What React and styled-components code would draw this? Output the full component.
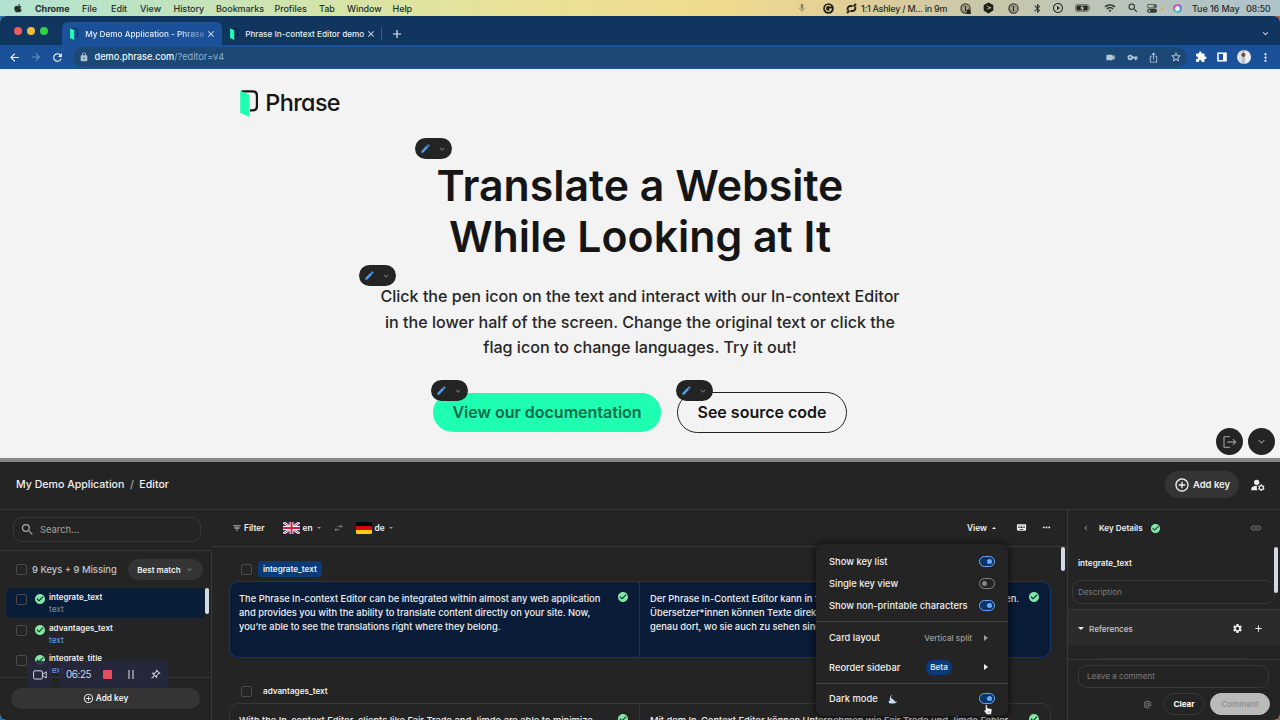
import React from 'react';
import styled, { createGlobalStyle, css } from 'styled-components';
import { FaApple } from 'react-icons/fa';
import {
  MdAdd, MdAddCircleOutline, MdAlternateEmail, MdArrowBack, MdArrowForward, MdBluetooth,
  MdCheckCircle, MdChevronLeft, MdClose, MdEdit, MdExpandMore, MdExtension, MdFilterList,
  MdIosShare, MdKeyboard, MdLink, MdLock, MdLogout, MdManageAccounts, MdMic, MdMoreHoriz,
  MdMoreVert, MdOutlinePushPin, MdPlayCircleOutline, MdRefresh, MdSearch, MdSettings,
  MdStarBorder, MdVideocam, MdVpnKey, MdWifi,
} from 'react-icons/md';

const GlobalStyle = createGlobalStyle`
  * { box-sizing: border-box; }
  body { margin: 0; overflow: hidden; font-family: Inter, "Liberation Sans", sans-serif; }
  svg { display: block; flex-shrink: 0; }
  h1, p { margin: 0; }
`;

const line = '#383838';

const Desktop = styled.div`
  width: 1280px;
  height: 720px;
  display: flex;
  flex-direction: column;
  overflow: hidden;
  background: linear-gradient(90deg, #2a6fb0 0%, #2a6fb0 50%, #c4552f 50%, #c4552f 100%);
`;

/* ---------- menu bar ---------- */

const MenuBar = styled.div`
  display: flex;
  align-items: center;
  height: 16px;
  padding-left: 12px;
  font-size: 9px;
  color: #23302c;
  white-space: nowrap;
  background: linear-gradient(90deg, #b3e2d2 0%, #bfe3c0 12%, #d3e4a9 25%, #e9e297 40%, #eedb8c 56%, #e2cf97 66%, #cbc8a9 76%, #b8c4bb 88%, #afc3cb 100%);
`;

const MenuItem = styled.span`
  width: ${p => p.$w}px;
  font-weight: ${p => (p.$bold ? 700 : 500)};
  letter-spacing: ${p => p.$ls || 0}px;
`;

const Slot = styled.span`
  display: flex;
  align-items: center;
  justify-content: center;
  width: ${p => p.$w}px;
  color: ${p => p.$color || 'inherit'};
`;

const Spring = styled.div`
  flex: 1;
`;

const OrangeDot = styled.i`
  width: 3px;
  height: 3px;
  border-radius: 50%;
  background: #eda541;
`;

const Siri = styled.i`
  width: 9px;
  height: 9px;
  border-radius: 50%;
  background: radial-gradient(#eee 30%, transparent 45%), conic-gradient(#c85ad0, #5a6fe0, #39b8c8, #4fd0b8, #d0508c, #c85ad0);
`;

/* ---------- browser ---------- */

const BrowserWindow = styled.div`
  display: flex;
  flex-direction: column;
  height: 704px;
  border-radius: 6px;
  overflow: hidden;
  background: #f3f3f3;
`;

const TabStrip = styled.div`
  display: flex;
  align-items: flex-end;
  height: 29px;
  background: #10365f;
  color: #e4ecf5;
`;

const Lights = styled.div`
  display: flex;
  gap: 5px;
  width: 62px;
  height: 29px;
  padding: 11px 0 0 14px;
`;

const Light = styled.i`
  width: 8px;
  height: 8px;
  border-radius: 50%;
  background: ${p => p.$color};
`;

const Tab = styled.div`
  display: flex;
  align-items: center;
  width: 160px;
  height: 23px;
  padding-left: 8px;
  border-radius: 6px 6px 0 0;
  background: ${p => (p.$active ? '#1b5199' : 'transparent')};
`;

const TabTitle = styled.span`
  width: 119px;
  margin: 0 2px 0 7px;
  font-size: 8.2px;
  font-weight: 500;
  white-space: nowrap;
  ${p => p.$fade && css`
    mask-image: linear-gradient(90deg, #000 80%, rgba(0, 0, 0, 0.35) 97%);
  `}
`;

const StripButton = styled.span`
  display: flex;
  align-items: center;
  justify-content: center;
  height: 23px;
  width: ${p => p.$w}px;
`;

const TabSeparator = styled.i`
  width: 1px;
  height: 13px;
  margin: 0 0 5px -1px;
  background: #3a5b82;
`;

const AddressRow = styled.div`
  display: flex;
  align-items: center;
  height: 24px;
  background: #1b5199;
  color: #fff;
`;

const NavIcons = styled.div`
  display: flex;
  align-items: center;
  width: 73px;
  padding-left: 8px;
  gap: 9px;
`;

const Omnibox = styled.div`
  display: flex;
  align-items: center;
  width: 1114px;
  height: 20px;
  padding-left: 6px;
  border-radius: 10px;
  background: #1b4874;
  font-size: 9.2px;
  color: #8eb0d2;
`;

const Url = styled.span`
  margin-left: 5.5px;
  padding-bottom: 1px;
  b { font-weight: 500; color: #f2f6fa; }
`;

const Avatar = styled.i`
  width: 14px;
  height: 14px;
  border-radius: 50%;
  background: radial-gradient(circle at 45% 35%, #7a4a3c 0 1.5px, transparent 2.5px), linear-gradient(90deg, #dfe3ea 30%, #a9b2bd 45%, #eceff3 65%);
`;

/* ---------- demo page ---------- */

const Page = styled.main`
  position: relative;
  height: 389px;
  display: flex;
  flex-direction: column;
  align-items: center;
  color: #151515;
`;

const Brand = styled.div`
  display: flex;
  align-items: center;
  gap: 7px;
  width: 800px;
  height: 30px;
  margin-top: 19px;
`;

const BrandName = styled.span`
  font-size: 23.4px;
  line-height: 28px;
  font-weight: 500;
  letter-spacing: -0.65px;
  font-feature-settings: 'cv11';
`;

const Title = styled.h1`
  margin-top: 42px;
  font-size: 42.8px;
  line-height: 51px;
  font-weight: 600;
  text-align: center;
`;

const Lead = styled.p`
  margin-top: 22px;
  font-size: 16.1px;
  line-height: 25.7px;
  font-weight: 500;
  color: #262626;
  text-align: center;
  white-space: nowrap;
`;

const Actions = styled.div`
  display: flex;
  align-items: center;
  gap: 16px;
  margin-top: 31px;
`;

const ActionButton = styled.div`
  position: relative;
  display: flex;
  align-items: center;
  justify-content: center;
  width: ${p => (p.$primary ? 228 : 170)}px;
  height: ${p => (p.$primary ? 39 : 41)}px;
  padding-bottom: 2px;
  border-radius: 21px;
  border: ${p => (p.$primary ? 'none' : '1.5px solid #222')};
  background: ${p => (p.$primary ? '#1effb2' : 'transparent')};
  color: ${p => (p.$primary ? '#0b6b4a' : '#151515')};
  font-size: 16px;
  font-weight: 600;
  white-space: nowrap;
`;

/* edit badge that floats over each translatable text */
const PenBadge = styled.div`
  position: absolute;
  left: ${p => p.$left}px;
  top: ${p => p.$top}px;
  display: flex;
  align-items: center;
  justify-content: space-between;
  width: 37px;
  height: 21px;
  padding: 0 5px 0 5px;
  border-radius: 11px;
  background: #242424;
  color: #4f9ff0;
  svg + svg { color: #777; }
`;

const FloatButtons = styled.div`
  position: absolute;
  right: 5px;
  bottom: 3px;
  display: flex;
  gap: 5px;
`;

const RoundButton = styled.div`
  display: flex;
  align-items: center;
  justify-content: center;
  width: 27px;
  height: 27px;
  border-radius: 50%;
  background: #242424;
  color: #8c8c8c;
`;

/* ---------- editor ---------- */

const Editor = styled.section`
  position: relative;
  height: 262px;
  border-top: 4px solid #868686;
  background: #242424;
  color: #f0f0f0;
  font-size: 8.1px;
`;

const EditorHeader = styled.header`
  display: flex;
  align-items: center;
  justify-content: space-between;
  height: 48px;
  padding: 0 14px 2px 16px;
  border-bottom: 1px solid ${line};
`;

const Crumbs = styled.div`
  display: flex;
  gap: 5.5px;
  font-size: 10.6px;
  font-weight: 500;
  i { font-style: normal; color: #aaa; }
`;

const HeaderActions = styled.div`
  display: flex;
  align-items: center;
  gap: 11px;
`;

const AddKey = styled.div`
  display: flex;
  align-items: center;
  justify-content: center;
  gap: 3px;
  width: 74px;
  height: 27px;
  border-radius: 14px;
  background: #343434;
  font-size: 9.5px;
  font-weight: 600;
`;

const Columns = styled.div`
  display: flex;
  height: 210px;
`;

const Sidebar = styled.aside`
  display: flex;
  flex-direction: column;
  width: 212px;
`;

const SearchArea = styled.div`
  height: 41px;
  padding: 7px 11px 0 13px;
  border-bottom: 1px solid ${line};
`;

const SearchBox = styled.div`
  display: flex;
  align-items: center;
  gap: 5px;
  height: 25px;
  padding-left: 6px;
  border: 1px solid ${line};
  border-radius: 9px;
  color: #a2a2a2;
  font-size: 9.4px;
`;

const KeyPane = styled.div`
  flex: 1;
  display: flex;
  flex-direction: column;
  border-right: 1px solid ${line};
`;

const KeyHead = styled.div`
  display: flex;
  align-items: center;
  height: 37px;
  padding-left: 16px;
  color: #c4c4c4;
  font-size: 9.4px;
  font-weight: 500;
`;

const Checkbox = styled.i`
  width: 11px;
  height: 11px;
  flex-shrink: 0;
  border: 1px solid #4a4a4a;
  border-radius: 2px;
`;

const KeyCount = styled.span`
  width: 96px;
  margin-left: 5px;
  white-space: nowrap;
`;

const SortButton = styled.div`
  display: flex;
  align-items: center;
  justify-content: center;
  gap: 4px;
  width: 75px;
  height: 21px;
  border-radius: 11px;
  background: #343434;
  color: #f2f2f2;
  font-size: 8px;
  font-weight: 600;
  svg { color: #888; }
`;

const KeyList = styled.div`
  position: relative;
  height: 88.5px;
  padding-left: 6px;
  overflow: hidden;
`;

const KeyRow = styled.div`
  display: flex;
  width: 200px;
  height: 30px;
  margin-bottom: 0.6px;
  padding: 3px 0 0 10px;
  border-radius: 6px;
  background: ${p => (p.$selected ? '#0a1d38' : 'transparent')};
  line-height: 12px;
  ${Checkbox} { margin-top: 3px; }
  svg { margin: 2px 3px 0 7px; color: #7fe9a4; }
`;

const KeyName = styled.div`
  font-weight: 600;
  font-size: 8px;
  div {
    font-weight: 400;
    font-size: 8.3px;
    color: ${p => (p.$selected ? '#7f8c9e' : '#5ea2ea')};
  }
`;

const Thumb = styled.div`
  position: absolute;
  right: ${p => p.$right}px;
  top: ${p => p.$top}px;
  width: 4px;
  height: ${p => p.$height}px;
  border-radius: 2px;
  background: #d2dae4;
`;

const SideFooter = styled.div`
  flex: 1;
  padding: 10px 11px 0;
  border-top: 1px solid ${line};
`;

const WideAdd = styled.div`
  display: flex;
  align-items: center;
  justify-content: center;
  gap: 2px;
  height: 21px;
  border-radius: 11px;
  background: #343434;
  font-size: 8.3px;
  font-weight: 600;
`;

const Recorder = styled.div`
  position: absolute;
  left: 27px;
  top: 199px;
  display: flex;
  gap: 7px;
  color: #d5d6e2;
`;

const RecorderBox = styled.div`
  display: flex;
  align-items: center;
  justify-content: space-between;
  width: ${p => p.$w}px;
  height: 27px;
  padding: 0 ${p => p.$pad}px;
  border-radius: 4px;
  background: rgba(38, 40, 62, 0.88);
  font-size: 9.8px;
  letter-spacing: -0.4px;
`;

const StopSquare = styled.i`
  width: 9px;
  height: 9px;
  margin-left: -3px;
  border-radius: 1px;
  background: #e84d5b;
`;

const Main = styled.div`
  position: relative;
  width: 856px;
  border-right: 1px solid ${line};
`;

const MainBar = styled.div`
  display: flex;
  align-items: center;
  height: 37px;
  padding: 0 15px 1px 20px;
  border-bottom: 1px solid ${line};
  font-size: 8.4px;
  font-weight: 600;
`;

const BarItem = styled.span`
  display: flex;
  align-items: center;
  gap: ${p => p.$gap || 3}px;
  width: ${p => p.$w}px;
`;

const Caret = styled.i`
  border: ${p => p.$s || 2}px solid transparent;
  ${p => p.$dir === 'up' && css`border-bottom-color: currentColor; margin: 0 0 2px 2px;`}
  ${p => p.$dir === 'down' && css`border-top-color: currentColor; margin-top: 2px;`}
  ${p => p.$dir === 'right' && css`border-left: 4px solid currentColor; border-right: 0; border-top-width: 3px; border-bottom-width: 3px;`}
  ${p => p.$dim && css`color: #999; margin-left: 2px;`}
`;

const Cards = styled.div`
  height: 173px;
  padding: 12px 16px 0 17px;
  overflow: hidden;
`;

const CardHead = styled.div`
  display: flex;
  align-items: center;
  gap: 6px;
  height: 21px;
  padding: 0 0 1px 12px;
`;

const KeyPill = styled.span`
  padding: 0 5px;
  height: 16px;
  line-height: 16px;
  border-radius: 4px;
  background: ${p => (p.$active ? '#0a3b76' : 'transparent')};
  font-weight: 600;
`;

const Card = styled.div`
  display: flex;
  height: 77px;
  margin: 1px 0 23px;
  border: 1px solid ${p => (p.$active ? '#123a68' : line)};
  border-radius: 10px;
  background: ${p => (p.$active ? '#0a1c37' : 'transparent')};
`;

const Cell = styled.div`
  display: flex;
  justify-content: space-between;
  width: 409px;
  padding: 10px 10px 0 9px;
  font-size: 9.33px;
  line-height: 14px;
  font-weight: 500;
  white-space: nowrap;
  & + & {
    flex: 1;
    padding-left: 10px;
    border-left: 1px solid ${p => (p.$active ? '#123a68' : line)};
  }
  svg { margin-top: -1px; color: #7fe9a4; }
`;

const ViewMenu = styled.div`
  position: absolute;
  left: 604px;
  top: 34px;
  width: 192px;
  height: 172px;
  padding-top: 6.5px;
  border-radius: 8px;
  background: #242424;
  box-shadow: 0 1px 7px 2px rgba(0, 0, 0, 0.55);
  font-size: 9.35px;
  font-weight: 500;
`;

const MenuRow = styled.div`
  display: flex;
  align-items: center;
  justify-content: space-between;
  height: ${p => p.$h || 22}px;
  padding: 0 ${p => p.$right || 13}px 0 13px;
`;

const MenuLine = styled.div`
  height: 1px;
  margin: ${p => p.$m};
  background: #414141;
`;

const MenuGroup = styled.span`
  display: flex;
  align-items: center;
  gap: ${p => p.$gap}px;
  color: ${p => p.$color || 'inherit'};
  font-size: ${p => p.$size || 9.35}px;
`;

const Toggle = styled.i`
  display: flex;
  align-items: center;
  justify-content: ${p => (p.$on ? 'flex-end' : 'flex-start')};
  width: 16px;
  height: 11px;
  padding: 0 2px;
  border: 1px solid ${p => (p.$on ? '#6aaaf4' : '#858585')};
  border-radius: 6px;
  background: ${p => (p.$on ? '#0b3468' : 'transparent')};
  &::after {
    content: '';
    width: 5px;
    height: 5px;
    border-radius: 50%;
    background: ${p => (p.$on ? '#6aaaf4' : '#858585')};
  }
`;

const Beta = styled.span`
  height: 15px;
  line-height: 15px;
  padding: 0 4px;
  border-radius: 7px;
  background: #0a3b76;
  color: #cfe3fb;
  font-size: 8.2px;
  font-weight: 600;
`;

const Pointer = styled.div`
  position: absolute;
  left: 167px;
  top: 160px;
`;

const Details = styled.aside`
  position: relative;
  display: flex;
  flex-direction: column;
  width: 212px;
`;

const DetailsHead = styled.div`
  display: flex;
  align-items: center;
  height: 36px;
  padding: 0 18px 0 13px;
  font-weight: 600;
  span { width: 51px; margin-left: 8px; white-space: nowrap; }
`;

const DetailsKey = styled.div`
  height: 34px;
  padding-left: 10px;
  line-height: 34px;
  font-weight: 600;
`;

const Field = styled.div`
  height: ${p => p.$h}px;
  line-height: ${p => p.$h - 2}px;
  margin: ${p => p.$m};
  padding-left: ${p => p.$pad}px;
  border: 1px solid ${line};
  border-radius: 9px;
  color: #7c7c7c;
`;

const References = styled.div`
  display: flex;
  align-items: center;
  height: 37px;
  margin-top: 5px;
  padding: 1px 16px 0 10px;
  border-top: 1px solid ${line};
  background: #2b2b2b;
  font-weight: 500;
  span { flex: 1; margin-left: 5px; color: #c8c8c8; }
  svg + svg { margin-left: 10px; }
`;

const ReferenceEdge = styled.div`
  height: 1px;
  margin: 12px 33px 0 32px;
  background: #303030;
`;

const CommentBox = styled.div`
  flex: 1;
  border-top: 1px solid ${line};
`;

const CommentActions = styled.div`
  display: flex;
  align-items: center;
  justify-content: flex-end;
  height: 32px;
  padding-right: 10px;
  color: #8a8a8a;
`;

const PillButton = styled.div`
  height: 22px;
  line-height: 20px;
  width: ${p => p.$w}px;
  margin-left: ${p => p.$ml}px;
  text-align: center;
  border: 1px solid ${p => (p.$muted ? '#bababa' : '#3a3a3a')};
  border-radius: 11px;
  background: ${p => (p.$muted ? '#bababa' : 'transparent')};
  color: ${p => (p.$muted ? '#8a8a8a' : '#fff')};
  font-weight: ${p => (p.$muted ? 500 : 700)};
`;

/* ---------- drawings ---------- */

const PhraseMark = ({ size = 27, dark = '#151515' }) => (
  <svg width={size * 0.68} height={size} viewBox="0 0 18.4 27">
    <path d="M1.5 1.3H12.5Q17 1.3 17 5.8V16.2Q17 20.4 12.5 20.4H10" fill="none" stroke={dark} strokeWidth="2.3" />
    <path d="M.2.6 9.4 4.8V27L.2 22.8Z" fill="#1effb2" />
  </svg>
);

const UkFlag = () => (
  <svg width="17" height="12" viewBox="0 0 17 12">
    <rect width="17" height="12" rx="1.5" fill="#23306f" />
    <path d="M0 0 17 12M17 0 0 12" stroke="#fff" strokeWidth="2.4" />
    <path d="M0 0 17 12M17 0 0 12" stroke="#d21f3c" strokeWidth=".8" />
    <path d="M8.5 0V12M0 6H17" stroke="#fff" strokeWidth="3.8" />
    <path d="M8.5 0V12M0 6H17" stroke="#d21f3c" strokeWidth="2" />
  </svg>
);

const DeFlag = () => (
  <svg width="16" height="12" viewBox="0 0 16 12">
    <path d="M1.5 0H14.5Q16 0 16 1.5V4H0V1.5Q0 0 1.5 0Z" fill="#050505" />
    <path d="M0 4H16V8H0Z" fill="#d40a0a" />
    <path d="M0 8H16V10.5Q16 12 14.5 12H1.5Q0 12 0 10.5Z" fill="#ffce18" />
  </svg>
);

const SwapArrows = () => (
  <svg width="9" height="8" viewBox="0 0 9 8" fill="none" stroke="#858585" strokeWidth=".9">
    <path d="M3.5 2.3H8M6.6.8 8.1 2.3 6.6 3.8M5.5 5.7H1M2.4 4.2.9 5.7 2.4 7.2" />
  </svg>
);

const GrammarBadge = () => (
  <svg width="11" height="11" viewBox="0 0 11 11">
    <circle cx="5.5" cy="5.5" r="5.3" fill="#1d2017" />
    <path d="M7.8 3.6A3 3 0 1 0 8.3 6.2H6" fill="none" stroke="#e8d489" strokeWidth="1.2" />
  </svg>
);

const Rings = () => (
  <svg width="11" height="11" viewBox="0 0 11 11" fill="none" stroke="#1d2017" strokeWidth="1.9">
    <path d="M1.7 7.4Q1 3.2 4.6 3H6.6M9.3 3.6Q10 7.8 6.4 8H4.4M1 10 3.4 7.8M10 1 7.6 3.2" />
  </svg>
);

const KeyholeIcon = ({ locked }) => (
  <svg width="11" height="11" viewBox="0 0 11 11">
    <circle cx="5.5" cy="5.5" r="4.6" fill="none" stroke="#36372e" strokeWidth="1.2" />
    <circle cx="5.5" cy="5.5" r="2.9" fill="none" stroke="#36372e" strokeWidth=".6" />
    <path d="M5.5 3.2V7.8" stroke="#24251e" strokeWidth="1.5" />
    {locked && <path d="M6.5 7.5H10.8V11H6.5ZM7.4 7.5V6.2H9.9V7.5" fill="#24251e" />}
  </svg>
);

const HexIcon = () => (
  <svg width="11" height="12" viewBox="0 0 11 12">
    <path d="M5.5.4 10.3 3V8.6L5.8 11.3 5.3 11.6.7 8.6V3Z" fill="#1d2017" />
    <path d="M3.6 3.9 6.9 5.7 3.8 7.4" fill="none" stroke="#c9c3a0" strokeWidth=".8" />
    <circle cx="7.2" cy="5.7" r=".9" fill="#c9c3a0" />
  </svg>
);

const BatteryIcon = () => (
  <svg width="16" height="8" viewBox="0 0 16 8">
    <rect x=".5" y=".5" width="13.2" height="7" rx="1.8" fill="none" stroke="#5f655a" strokeWidth=".8" />
    <rect x="1.5" y="1.5" width="11.2" height="5" rx="1" fill="#23241e" />
    <path d="M8 .6 5 4.4H7L6.3 7.4 9.4 3.6H7.4Z" fill="#c4c7b2" />
    <path d="M14.6 2.8V5.2" stroke="#5f655a" />
  </svg>
);

const ControlIcon = () => (
  <svg width="10" height="9" viewBox="0 0 10 9">
    <rect x=".4" y=".4" width="9.2" height="3.5" rx="1.7" fill="none" stroke="#333b37" strokeWidth=".8" />
    <circle cx="7.7" cy="2.1" r="1.2" fill="#333b37" />
    <rect x="0" y="4.8" width="10" height="4" rx="2" fill="#333b37" />
    <circle cx="2.3" cy="6.8" r="1" fill="#b8c4bb" />
  </svg>
);

const PanelIcon = () => (
  <svg width="10" height="10" viewBox="0 0 10 10">
    <rect x="1" y="1.2" width="8" height="7.6" fill="none" stroke="#fff" strokeWidth="1.5" />
    <path d="M6 1H9.2V9H6Z" fill="#fff" />
  </svg>
);

const CameraIcon = () => (
  <svg width="14" height="10" viewBox="0 0 14 10" fill="none" stroke="currentColor">
    <rect x=".6" y=".8" width="8.8" height="8.2" rx="1.2" />
    <path d="M9.6 4.2 13.2 1.8V8L9.6 5.6" />
  </svg>
);

const PauseIcon = () => (
  <svg width="6" height="9" viewBox="0 0 6 9" stroke="currentColor" strokeWidth="1.1">
    <path d="M1 0V9M5 0V9" />
  </svg>
);

const NightIcon = () => (
  <svg width="10" height="10" viewBox="0 0 10 10" fill="#c9dcee">
    <path d="M4.2.6Q2.6 2.6 3.4 4.6 4.6 4.6 5.2 5.8 6.6 6 6.8 7.6 8.4 7.8 9.4 7.2 8 9.6 5.2 9.4H2Q.6 9.2.6 7.8.8 6.6 1.9 6.4 1.4 2.4 4.2.6Z" />
  </svg>
);

const HandCursor = () => (
  <svg width="10" height="11" viewBox="0 0 10 11">
    <path d="M3 .7Q4.1.5 4.2 1.6V4L8.2 4.8Q9.2 5 9 6.2L8.2 10.4H3.8L.9 7Q.7 5.7 2 6L2.4 6.4V1.4Q2.4.8 3 .7Z" fill="#fff" stroke="#222" strokeWidth=".6" />
    <path d="M5 7V9M6.6 7V9" stroke="#555" strokeWidth=".5" />
  </svg>
);

const menus = [
  ['Chrome', 47, true], ['File', 29], ['Edit', 29], ['View', 33.5], ['History', 42.5],
  ['Bookmarks', 58.5], ['Profiles', 44.5], ['Tab', 28], ['Window', 45.5], ['Help', 30],
];

const keys = [
  { name: 'integrate_text', selected: true },
  { name: 'advantages_text' },
  { name: 'integrate_title' },
];

const Badge = ({ left, top }) => (
  <PenBadge $left={left} $top={top}>
    <MdEdit size={11} />
    <MdExpandMore size={10} />
  </PenBadge>
);

const SystemBar = () => (
  <MenuBar>
    <Slot $w={11}><FaApple size={10} /></Slot>
    <Slot $w={12} />
    {menus.map(([label, w, bold]) => (
      <MenuItem key={label} $w={w} $bold={bold} $ls={-0.05}>{label}</MenuItem>
    ))}
    <Spring />
    <Slot $w={24} $color="#85816a"><MdMic size={10} /></Slot>
    <Slot $w={28}><GrammarBadge /></Slot>
    <Slot $w={19}><Rings /></Slot>
    <MenuItem $w={91} $ls={-0.27}>1:1 Ashley / M... in 9m</MenuItem>
    <Slot $w={26}><KeyholeIcon locked /></Slot>
    <Slot $w={20}><HexIcon /></Slot>
    <Slot $w={30}><KeyholeIcon /></Slot>
    <Slot $w={18}><MdBluetooth size={11} /></Slot>
    <Slot $w={24}><MdPlayCircleOutline size={12} /></Slot>
    <Slot $w={26}><BatteryIcon /></Slot>
    <Slot $w={28}><MdWifi size={12} /></Slot>
    <Slot $w={18}><MdSearch size={12} /></Slot>
    <Slot $w={19}><ControlIcon /></Slot>
    <OrangeDot />
    <Slot $w={26}><Siri /></Slot>
    <Slot $w={2} />
    <MenuItem $w={52} $ls={-0.1}>Tue 16 May</MenuItem>
    <MenuItem $w={36} $ls={-0.3}>&nbsp;08:50</MenuItem>
  </MenuBar>
);

const BrowserChrome = () => (
  <>
    <TabStrip>
      <Lights>
        <Light $color="#ef5c5c" />
        <Light $color="#f2bb40" />
        <Light $color="#35cf4b" />
      </Lights>
      <Tab $active>
        <PhraseMark size={12} dark="#0c2e50" />
        <TabTitle $fade>My Demo Application - Phrase</TabTitle>
        <MdClose size={10} />
      </Tab>
      <Tab>
        <PhraseMark size={12} dark="#08213b" />
        <TabTitle>Phrase In-context Editor demo</TabTitle>
        <MdClose size={10} />
      </Tab>
      <TabSeparator />
      <StripButton $w={29}><MdAdd size={14} /></StripButton>
      <Spring />
      <StripButton $w={30}><MdExpandMore size={11} /></StripButton>
    </TabStrip>
    <AddressRow>
      <NavIcons>
        <MdArrowBack size={13} />
        <MdArrowForward size={12} color="#6f94c4" />
        <MdRefresh size={13} />
      </NavIcons>
      <Omnibox>
        <MdLock size={10} color="#b3c3d3" />
        <Url><b>demo.phrase.com</b>/?editor=v4</Url>
        <Spring />
        <Slot $w={21}><MdVideocam size={11} color="#b5c6d6" /></Slot>
        <Slot $w={22}><MdVpnKey size={11} color="#b5c6d6" /></Slot>
        <Slot $w={21}><MdIosShare size={11} color="#b5c6d6" /></Slot>
        <Slot $w={23}><MdStarBorder size={12} color="#cbd7e3" /></Slot>
      </Omnibox>
      <Slot $w={4} />
      <Slot $w={20}><MdExtension size={12} /></Slot>
      <Slot $w={22}><PanelIcon /></Slot>
      <Slot $w={22}><Avatar /></Slot>
      <Slot $w={21}><MdMoreVert size={13} /></Slot>
    </AddressRow>
  </>
);

const DemoPage = () => (
  <Page>
    <Brand>
      <PhraseMark />
      <BrandName>Phrase</BrandName>
    </Brand>
    <Title>Translate a Website<br />While Looking at It</Title>
    <Lead>
      Click the pen icon on the text and interact with our In-context Editor<br />
      in the lower half of the screen. Change the original text or click the<br />
      flag icon to change languages. Try it out!
    </Lead>
    <Actions>
      <ActionButton $primary>View our documentation<Badge left={-2} top={-13} /></ActionButton>
      <ActionButton>See source code<Badge left={-2} top={-13} /></ActionButton>
    </Actions>
    <Badge left={415} top={69} />
    <Badge left={359} top={196} />
    <FloatButtons>
      <RoundButton><MdLogout size={16} /></RoundButton>
      <RoundButton><MdExpandMore size={13} /></RoundButton>
    </FloatButtons>
  </Page>
);

const KeySidebar = () => (
  <Sidebar>
    <SearchArea>
      <SearchBox><MdSearch size={15} />Search...</SearchBox>
    </SearchArea>
    <KeyPane>
      <KeyHead>
        <Checkbox />
        <KeyCount>9 Keys + 9 Missing</KeyCount>
        <SortButton>Best match<MdExpandMore size={9} /></SortButton>
      </KeyHead>
      <KeyList>
        {keys.map(k => (
          <KeyRow key={k.name} $selected={k.selected}>
            <Checkbox />
            <MdCheckCircle size={12} />
            <KeyName $selected={k.selected}>{k.name}<div>text</div></KeyName>
          </KeyRow>
        ))}
        <Thumb $right={2} $top={0} $height={26} />
      </KeyList>
      <SideFooter>
        <WideAdd><MdAddCircleOutline size={11} />Add key</WideAdd>
      </SideFooter>
    </KeyPane>
  </Sidebar>
);

const ViewDropdown = () => (
  <ViewMenu>
    <MenuRow>Show key list<Toggle $on /></MenuRow>
    <MenuRow>Single key view<Toggle /></MenuRow>
    <MenuRow>Show non-printable characters<Toggle $on /></MenuRow>
    <MenuLine $m="4px 0 0" />
    <MenuRow $h={32} $right={20}>
      Card layout
      <MenuGroup $gap={12} $color="#9c9c9c" $size={8.1}>Vertical split<Caret $dir="right" /></MenuGroup>
    </MenuRow>
    <MenuRow $h={27} $right={20}>
      Reorder sidebar
      <MenuGroup $gap={32}><Beta>Beta</Beta><Caret $dir="right" /></MenuGroup>
    </MenuRow>
    <MenuLine $m="2px 0 4px" />
    <MenuRow>
      <MenuGroup $gap={10}>Dark mode<NightIcon /></MenuGroup>
      <Toggle $on />
    </MenuRow>
    <Pointer><HandCursor /></Pointer>
  </ViewMenu>
);

const Translations = () => (
  <Main>
    <MainBar>
      <BarItem $w={51} $gap={2}><MdFilterList size={10} />Filter</BarItem>
      <BarItem $w={51} $gap={2.5}><UkFlag />en<Caret $dir="down" $dim /></BarItem>
      <BarItem $w={22}><SwapArrows /></BarItem>
      <BarItem $w={50} $gap={2.5}><DeFlag />de<Caret $dir="down" $dim /></BarItem>
      <Spring />
      <BarItem $w={49}>View<Caret $dir="up" /></BarItem>
      <BarItem $w={25}><MdKeyboard size={11} /></BarItem>
      <BarItem $w={11}><MdMoreHoriz size={11} /></BarItem>
    </MainBar>
    <Cards>
      <CardHead><Checkbox /><KeyPill $active>integrate_text</KeyPill></CardHead>
      <Card $active>
        <Cell>
          <p>
            The Phrase In-context Editor can be integrated within almost any web application<br />
            and provides you with the ability to translate content directly on your site. Now,<br />
            you’re able to see the translations right where they belong.
          </p>
          <MdCheckCircle size={12} />
        </Cell>
        <Cell $active>
          <p>
            Der Phrase In-Context Editor kann in fast jeder Web-Anwendung integriert werden.<br />
            Übersetzer*innen können Texte direkt auf der Webseite bearbeiten, das heißt&nbsp;&nbsp; -<br />
            genau dort, wo sie auch zu sehen sind.
          </p>
          <MdCheckCircle size={12} />
        </Cell>
      </Card>
      <CardHead><Checkbox /><KeyPill>advantages_text</KeyPill></CardHead>
      <Card>
        <Cell>
          <p>With the In-context Editor, clients like Fair Trade and Jimdo are able to minimize</p>
          <MdCheckCircle size={12} />
        </Cell>
        <Cell>
          <p>Mit dem In-Context Editor können Unternehmen wie Fair Trade und Jimdo Fehler</p>
          <MdCheckCircle size={12} />
        </Cell>
      </Card>
    </Cards>
    <Thumb $right={2} $top={37} $height={24} />
    <ViewDropdown />
  </Main>
);

const KeyDetails = () => (
  <Details>
    <DetailsHead>
      <MdChevronLeft size={10} color="#8a8a8a" />
      <span>Key Details</span>
      <MdCheckCircle size={11} color="#7fe9a4" />
      <Spring />
      <MdLink size={12} color="#7a7a7a" />
    </DetailsHead>
    <DetailsKey>integrate_text</DetailsKey>
    <Field $h={24} $m="0 5px 0 4px" $pad={5}>Description</Field>
    <References>
      <Caret $dir="down" $s={3} />
      <span>References</span>
      <MdSettings size={11} />
      <MdAdd size={11} />
    </References>
    <ReferenceEdge />
    <CommentBox>
      <Field $h={23} $m="5px 11px 0 10px" $pad={8}>Leave a comment</Field>
      <CommentActions>
        <MdAlternateEmail size={9} />
        <PillButton $w={42} $ml={11}>Clear</PillButton>
        <PillButton $w={60} $ml={5} $muted>Comment</PillButton>
      </CommentActions>
    </CommentBox>
    <Thumb $right={2} $top={37} $height={46} />
  </Details>
);

const App = () => (
  <Desktop>
    <GlobalStyle />
    <SystemBar />
    <BrowserWindow>
      <BrowserChrome />
      <DemoPage />
      <Editor>
        <EditorHeader>
          <Crumbs>My Demo Application <i>/</i> <span>Editor</span></Crumbs>
          <HeaderActions>
            <AddKey><MdAddCircleOutline size={16} />Add key</AddKey>
            <MdManageAccounts size={16} />
          </HeaderActions>
        </EditorHeader>
        <Columns>
          <KeySidebar />
          <Translations />
          <KeyDetails />
        </Columns>
        <Recorder>
          <RecorderBox $w={25} $pad={6}><CameraIcon /></RecorderBox>
          <RecorderBox $w={109} $pad={7}>
            06:25
            <StopSquare />
            <PauseIcon />
            <MdOutlinePushPin size={12} style={{ transform: 'rotate(45deg)' }} />
          </RecorderBox>
        </Recorder>
      </Editor>
    </BrowserWindow>
  </Desktop>
);

export default App;
